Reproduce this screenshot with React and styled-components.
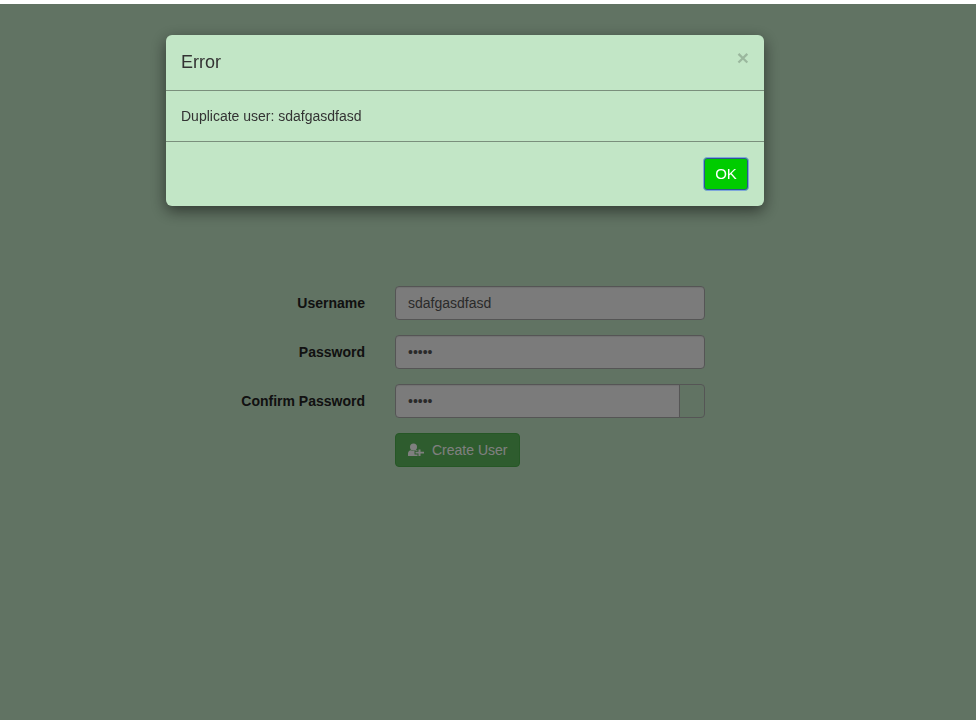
import React from 'react';
import styled, { createGlobalStyle } from 'styled-components';

const GlobalStyle = createGlobalStyle`
  html, body {
    margin: 0;
    height: 100%;
    background: #fff;
  }
  body {
    font-family: "Liberation Sans", Arial, sans-serif;
    font-size: 14px;
    line-height: 20px;
    color: #333;
  }
  * {
    box-sizing: border-box;
  }
`;

const Page = styled.div`
  margin-top: 4px;
  height: 716px;
  background: #c2e6c6;
  padding-top: 282px;
`;

const Form = styled.form`
  display: flex;
  flex-direction: column;
  gap: 15px;
`;

const Row = styled.div`
  display: grid;
  grid-template-columns: 365px 310px;
  column-gap: 30px;
  align-items: center;
`;

const Label = styled.label`
  text-align: right;
  font-weight: bold;
  color: #222;
`;

const Input = styled.input`
  width: 100%;
  height: 34px;
  padding: 6px 12px;
  font: inherit;
  color: #555;
  background: #f6f6f6;
  border: 1px solid #aaa;
  border-radius: 4px;
  box-shadow: inset 0 1px 1px rgba(0, 0, 0, 0.075);
`;

const Group = styled.div`
  display: flex;
  ${Input} {
    border-radius: 4px 0 0 4px;
  }
`;

const Addon = styled.span`
  flex: 0 0 26px;
  height: 34px;
  margin-left: -1px;
  border: 1px solid #aaa;
  border-radius: 0 4px 4px 0;
`;

const SubmitButton = styled.button`
  display: inline-flex;
  align-items: center;
  gap: 6px;
  height: 34px;
  padding: 6px 12px;
  font: inherit;
  color: #fff;
  background: #5cb85c;
  border: 1px solid #4cae4c;
  border-radius: 4px;
  justify-self: start;
`;

const UserPlusIcon = () => (
  <svg width="18" height="14" viewBox="0 0 18 14" fill="currentColor">
    <circle cx="5.5" cy="4" r="3.5" />
    <path d="M0 13V10.5C0 8.5 1.3 7.2 3 7.2C4 8 7 8 8 7.2L9.5 7.5V8H6.5V11.5H9.5V13Z" />
    <path d="M10.5 6.5h2v2.3h3.5v1.7h-3.5V13h-2v-2.5H7.5V8.8h3z" />
  </svg>
);

const Backdrop = styled.div`
  position: fixed;
  top: 4px;
  left: 0;
  right: 0;
  bottom: 0;
  background: rgba(0, 0, 0, 0.5);
`;

const Modal = styled.div`
  position: fixed;
  top: 35px;
  left: 166px;
  width: 598px;
  background: #c2e6c6;
  border-radius: 6px;
  box-shadow: 0 5px 15px rgba(0, 0, 0, 0.5);
`;

const ModalHeader = styled.div`
  position: relative;
  height: 56px;
  padding: 15px;
  border-bottom: 1px solid #7a8f7c;
`;

const ModalTitle = styled.h4`
  margin: 0;
  font-size: 18px;
  font-weight: normal;
  line-height: 25px;
  color: #333;
`;

const Close = styled.span`
  position: absolute;
  top: 12px;
  right: 15px;
  font-size: 21px;
  font-weight: bold;
  line-height: 21px;
  color: #000;
  opacity: 0.2;
`;

const ModalBody = styled.div`
  height: 51px;
  padding: 15px;
  border-bottom: 1px solid #7a8f7c;
`;

const ModalFooter = styled.div`
  display: flex;
  justify-content: flex-end;
  height: 64px;
  padding: 15px;
`;

const OkButton = styled.button`
  width: 46px;
  height: 34px;
  padding: 0;
  font: inherit;
  font-size: 15px;
  color: #fff;
  background: #00cc00;
  border: 1px solid #7fa6dc;
  border-radius: 4px;
  box-shadow: inset 0 0 0 1px #2b5a8c;
`;

const App = () => {
  return (
    <>
      <GlobalStyle />
      <Page>
        <Form>
          <Row>
            <Label>Username</Label>
            <Input type="text" defaultValue="sdafgasdfasd" />
          </Row>
          <Row>
            <Label>Password</Label>
            <Input type="password" defaultValue="abcde" />
          </Row>
          <Row>
            <Label>Confirm Password</Label>
            <Group>
              <Input type="password" defaultValue="abcde" />
              <Addon />
            </Group>
          </Row>
          <Row>
            <span />
            <SubmitButton type="button">
              <UserPlusIcon />
              Create User
            </SubmitButton>
          </Row>
        </Form>
      </Page>
      <Backdrop />
      <Modal>
        <ModalHeader>
          <ModalTitle>Error</ModalTitle>
          <Close>×</Close>
        </ModalHeader>
        <ModalBody>Duplicate user: sdafgasdfasd</ModalBody>
        <ModalFooter>
          <OkButton type="button">OK</OkButton>
        </ModalFooter>
      </Modal>
    </>
  );
};

export default App;
